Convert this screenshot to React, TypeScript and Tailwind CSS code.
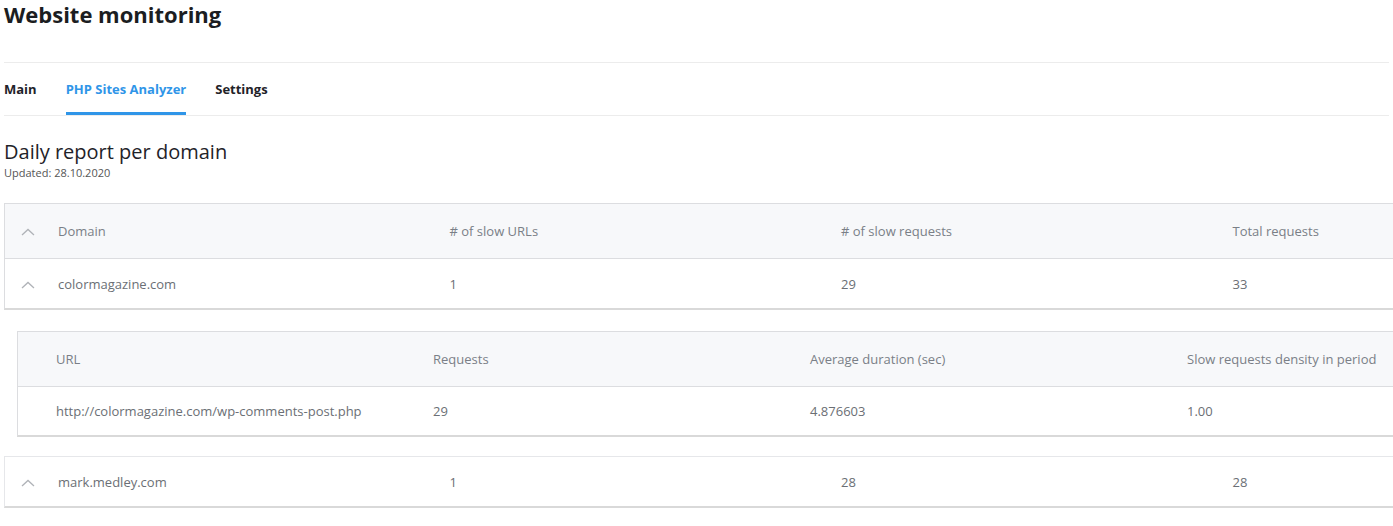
import React from "react";

const font = { fontFamily: '"Open Sans", "Noto Sans", sans-serif' };

function Chevron() {
  return (
    <svg width="14" height="8" viewBox="0 0 14 8" fill="none" className="text-[#b0b3b8]">
      <path d="M1 7L7 1.5L13 7" stroke="currentColor" strokeWidth="1.3" />
    </svg>
  );
}

const domainCols = ["Domain", "# of slow URLs", "# of slow requests", "Total requests"];
const urlCols = ["URL", "Requests", "Average duration (sec)", "Slow requests density in period"];

function DomainRow({ cells, header }: { cells: string[]; header?: boolean }) {
  return (
    <div
      className={
        header
          ? "flex h-[54px] items-center bg-[#f7f8fa] pt-[2px] text-[#7a7f87]"
          : "flex h-[49px] items-center pt-[2px] text-[#6b6f75]"
      }
    >
      <div className="flex w-[53px] shrink-0 pl-[16px]">
        <Chevron />
      </div>
      {cells.map((c, i) => (
        <div key={i} className="w-[391.5px] shrink-0">
          {c}
        </div>
      ))}
    </div>
  );
}

export default function App() {
  return (
    <div className="w-[1393px] overflow-hidden bg-white text-[13px]" style={font}>
      <div className="px-[4px]">
        <h1 className="text-[22px] font-bold leading-[28px] text-[#1b1d21]">
          Website monitoring
        </h1>
        <div className="mt-[34px] border-t border-[#ececec]" />
        <nav className="flex h-[53px] items-end gap-[29px] border-b border-[#ececec] text-[13px] font-bold">
          <div className="pb-[16px] text-[#1f2329]">Main</div>
          <div className="border-b-[3px] border-[#2f95e8] pb-[13px] text-[#2f95e8]">
            PHP Sites Analyzer
          </div>
          <div className="pb-[16px] text-[#1f2329]">Settings</div>
        </nav>
        <h2 className="mt-[22px] text-[20px] leading-[28px] text-[#1f2329]">
          Daily report per domain
        </h2>
        <div className="text-[11px] leading-[14px] text-[#555]">Updated: 28.10.2020</div>
      </div>

      <div className="ml-[4px] mt-[23px] w-[1700px]">
        <div className="border border-b-2 border-[#dcdde0] border-b-[#d9d9d9]">
          <DomainRow cells={domainCols} header />
          <div className="border-t border-[#dcdde0]">
            <DomainRow cells={["colormagazine.com", "1", "29", "33"]} />
          </div>
        </div>

        <div className="ml-[13px] mt-[21px] border border-b-2 border-[#dcdde0] border-b-[#d9d9d9]">
          <div className="flex h-[54px] items-center bg-[#f7f8fa] pl-[38px] pt-[1px] text-[#7a7f87]">
            {urlCols.map((c, i) => (
              <div key={i} className="w-[377px] shrink-0">
                {c}
              </div>
            ))}
          </div>
          <div className="flex h-[49px] items-center border-t border-[#dcdde0] pl-[38px] pt-[1px] text-[#6b6f75]">
            {["http://colormagazine.com/wp-comments-post.php", "29", "4.876603", "1.00"].map(
              (c, i) => (
                <div key={i} className="w-[377px] shrink-0">
                  {c}
                </div>
              ),
            )}
          </div>
        </div>

        <div className="mt-[19px] border border-b-2 border-[#e6e7ea] border-b-[#d9d9d9]">
          <DomainRow cells={["mark.medley.com", "1", "28", "28"]} />
        </div>
      </div>
      <div className="h-[20px]" />
    </div>
  );
}
